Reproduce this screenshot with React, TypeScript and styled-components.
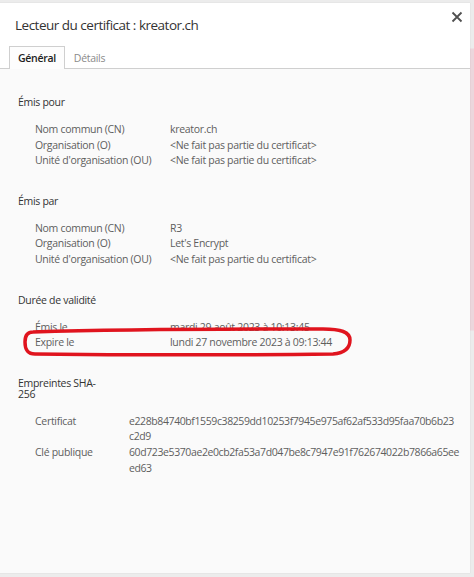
import React from 'react'
import styled, { createGlobalStyle } from 'styled-components'

const GlobalStyle = createGlobalStyle`
  html, body {
    margin: 0;
    padding: 0;
    background: #ececec;
  }
  body {
    font-family: "Open Sans", "Noto Sans", "Liberation Sans", sans-serif;
  }
`

const Page = styled.div`
  width: 474px;
  height: 577px;
  display: flex;
  padding-top: 3px;
  box-sizing: border-box;
  background: linear-gradient(to bottom, #ececec 0px, #ececec 48px, #ecd6dc 49px, #ecd6dc 330px, #ececec 331px);
`

const Dialog = styled.div`
  width: 470px;
  height: 570px;
  background: #ffffff;
  display: flex;
  flex-direction: column;
  box-shadow: 0 0 1px rgba(0, 0, 0, 0.15);
`

const Header = styled.div`
  display: flex;
  justify-content: space-between;
  align-items: flex-start;
  padding: 0 6px 0 15px;
  height: 41px;
`

const Title = styled.div`
  font-size: 13.5px;
  line-height: 18px;
  letter-spacing: -0.5px;
  color: #333333;
  padding-top: 13px;
`

const Close = styled.div`
  width: 14px;
  height: 14px;
  margin-top: 4px;
`

const TabBar = styled.div`
  display: flex;
  align-items: flex-end;
  padding-left: 9px;
  height: 24px;
  border-bottom: 1px solid #cfcfcf;
`

const Tab = styled.div<{ $active?: boolean }>`
  height: 23px;
  padding: 0 8px 1px 8px;
  box-sizing: border-box;
  display: flex;
  align-items: center;
  font-size: 10.5px;
  letter-spacing: -0.3px;
  font-weight: ${p => (p.$active ? 600 : 400)};
  color: ${p => (p.$active ? '#222222' : '#8a8a8a')};
  background: ${p => (p.$active ? '#fdfdfd' : 'transparent')};
  border: 1px solid ${p => (p.$active ? '#cfcfcf' : 'transparent')};
  border-bottom: none;
  margin-bottom: -1px;
`

const Body = styled.div`
  flex: 1;
  background: #fafafa;
  padding: 28px 10px 0 18px;
  display: flex;
  flex-direction: column;
  gap: 27px;
`

const Section = styled.div`
  position: relative;
  display: flex;
  flex-direction: column;
  gap: 14px;
`

const Heading = styled.div`
  font-size: 10.5px;
  line-height: 11px;
  letter-spacing: -0.3px;
  color: #333333;
  max-width: 88px;
`

const Rows = styled.div<{ $label: number }>`
  display: grid;
  grid-template-columns: ${p => p.$label}px 1fr;
  padding-left: 17px;
  font-size: 10.5px;
  line-height: 15.6px;
  letter-spacing: -0.3px;
  color: #5e5e5e;
`

const Value = styled.div<{ $hash?: boolean }>`
  letter-spacing: ${p => (p.$hash ? '-0.4px' : '-0.3px')};
  white-space: nowrap;
`

const Mark = styled.svg`
  position: absolute;
  left: 5px;
  top: 32px;
  width: 330px;
  height: 30px;
  pointer-events: none;
`

type Item = [string, string]

const issuedTo: Item[] = [
  ['Nom commun (CN)', 'kreator.ch'],
  ['Organisation (O)', '<Ne fait pas partie du certificat>'],
  ["Unité d'organisation (OU)", '<Ne fait pas partie du certificat>'],
]

const issuedBy: Item[] = [
  ['Nom commun (CN)', 'R3'],
  ['Organisation (O)', "Let's Encrypt"],
  ["Unité d'organisation (OU)", '<Ne fait pas partie du certificat>'],
]

const validity: Item[] = [
  ['Émis le', 'mardi 29 août 2023 à 10:13:45'],
  ['Expire le', 'lundi 27 novembre 2023 à 09:13:44'],
]

const prints: Item[] = [
  ['Certificat', 'e228b84740bf1559c38259dd10253f7945e975af62af533d95faa70b6b23c2d9'],
  ['Clé publique', '60d723e5370ae2e0cb2fa53a7d047be8c7947e91f762674022b7866a65eeed63'],
]

// the dialog wraps fingerprints after 60 hex digits
const chunk = (s: string) => s.match(/.{1,60}/g) ?? [s]

function Block(props: { title: string; items: Item[]; label?: number; hash?: boolean; children?: React.ReactNode }) {
  return (
    <Section>
      <Heading>{props.title}</Heading>
      <Rows $label={props.label ?? 135}>
        {props.items.map(([k, v]) => (
          <React.Fragment key={k}>
            <div>{k}</div>
            <Value $hash={props.hash}>
              {props.hash ? chunk(v).map(line => <div key={line}>{line}</div>) : v}
            </Value>
          </React.Fragment>
        ))}
      </Rows>
      {props.children}
    </Section>
  )
}

export default function App() {
  return (
    <Page>
      <GlobalStyle />
      <Dialog>
        <Header>
          <Title>Lecteur du certificat : kreator.ch</Title>
          <Close>
            <svg width="14" height="14" viewBox="0 0 14 14">
              <path d="M2.5 2.5 L11.5 11.5 M11.5 2.5 L2.5 11.5" stroke="#505050" strokeWidth="1.8" />
            </svg>
          </Close>
        </Header>
        <TabBar>
          <Tab $active>Général</Tab>
          <Tab>Détails</Tab>
        </TabBar>
        <Body>
          <Block title="Émis pour" items={issuedTo} />
          <Block title="Émis par" items={issuedBy} />
          <Block title="Durée de validité" items={validity}>
            <Mark viewBox="0 0 330 30">
              <path
                d="M10 5 C80 3 200 2 300 2 C318 2 327 5 327 13 C327 21 322 26 310 27 C220 28 100 28 12 27 C4 27 2 22 2 15 C2 9 4 5 10 5 Z"
                fill="none"
                stroke="#e0141e"
                strokeWidth="3.5"
                strokeLinejoin="round"
              />
            </Mark>
          </Block>
          <Block title="Empreintes SHA-256" items={prints} label={94} hash />
        </Body>
      </Dialog>
    </Page>
  )
}
